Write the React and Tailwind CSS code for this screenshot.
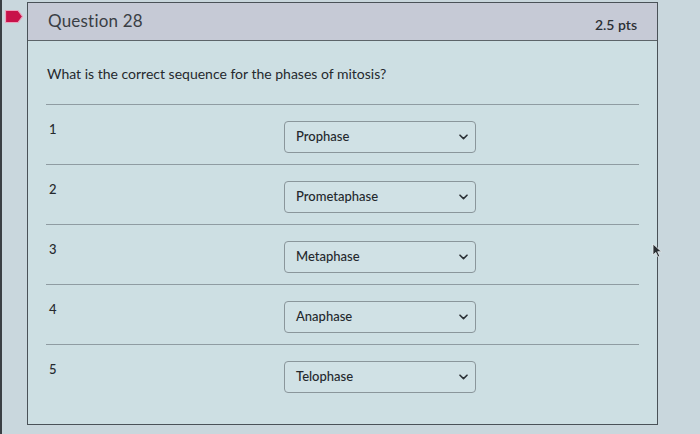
import React from 'react';

const phases = ['Prophase', 'Prometaphase', 'Metaphase', 'Anaphase', 'Telophase'];

const Chevron = () => (
    <svg width="9" height="6" viewBox="0 0 9 6" fill="none" stroke="#2c3136" strokeWidth="1.6" strokeLinecap="round" strokeLinejoin="round">
        <path d="M1 1.2 L4.5 4.6 L8 1.2" />
    </svg>
);

const Flag = () => (
    <svg width="20" height="15" viewBox="0 0 20 15">
        <path d="M1.5 1.5 H14 L18.5 7.5 L14 13.5 H1.5 Z" fill="#c8124a" stroke="#e9a3bd" strokeWidth="1.2" strokeLinejoin="round" />
    </svg>
);

export default function App() {
    return (
        <div className="relative w-[700px] h-[434px] overflow-hidden bg-[#c9d7dd] border-l-2 border-[#3a3f44] font-['Lato',sans-serif] text-[#25292e]">
            <div className="absolute left-[2px] top-[9px]"><Flag /></div>

            <div className="ml-[25px] mt-[2px] w-[631px] h-[423px] border border-[#4a5258] bg-[#cddfe3] flex flex-col">
                <div className="h-[38px] shrink-0 bg-[#c6cad6] border-b border-[#5c6469] flex items-center justify-between pl-[20px] pr-[20px]">
                    <span className="text-[17px] text-[#3a3e44] tracking-[0.2px] -mt-[2px]">Question 28</span>
                    <span className="text-[14px] font-semibold text-[#2b2f34] mt-[6px]">2.5 pts</span>
                </div>

                <div className="px-[18px]">
                    <p className="text-[14px] pt-[24px] pb-[21px] pl-[1px] leading-[18px]">What is the correct sequence for the phases of mitosis?</p>
                    <div className="border-t border-[#8f9ca2]">
                        {phases.map((p, i) => (
                            <div key={p} className={`flex items-start h-[60px] pt-[16px] ${i < phases.length - 1 ? 'border-b border-[#8f9ca2]' : ''}`}>
                                <div className="w-[238px] pl-[3px] text-[13px] leading-[16px] font-medium">{i + 1}</div>
                                <div className="w-[192px] h-[32px] rounded-[4px] border border-[#8a969b] bg-[#d0e1e5] flex items-center justify-between pl-[11px] pr-[7px]">
                                    <span className="text-[13px] font-medium text-[#24282d]">{p}</span>
                                    <Chevron />
                                </div>
                            </div>
                        ))}
                    </div>
                </div>
            </div>

            <svg className="absolute left-[650px] top-[243px]" width="11" height="15" viewBox="0 0 11 15">
                <path d="M1 1 L1 12 L3.8 9.4 L6 14 L7.8 13.2 L5.7 8.7 L9.5 8.7 Z" fill="#2a2f33" stroke="#e8eef0" strokeWidth="0.8" />
            </svg>
        </div>
    );
}
